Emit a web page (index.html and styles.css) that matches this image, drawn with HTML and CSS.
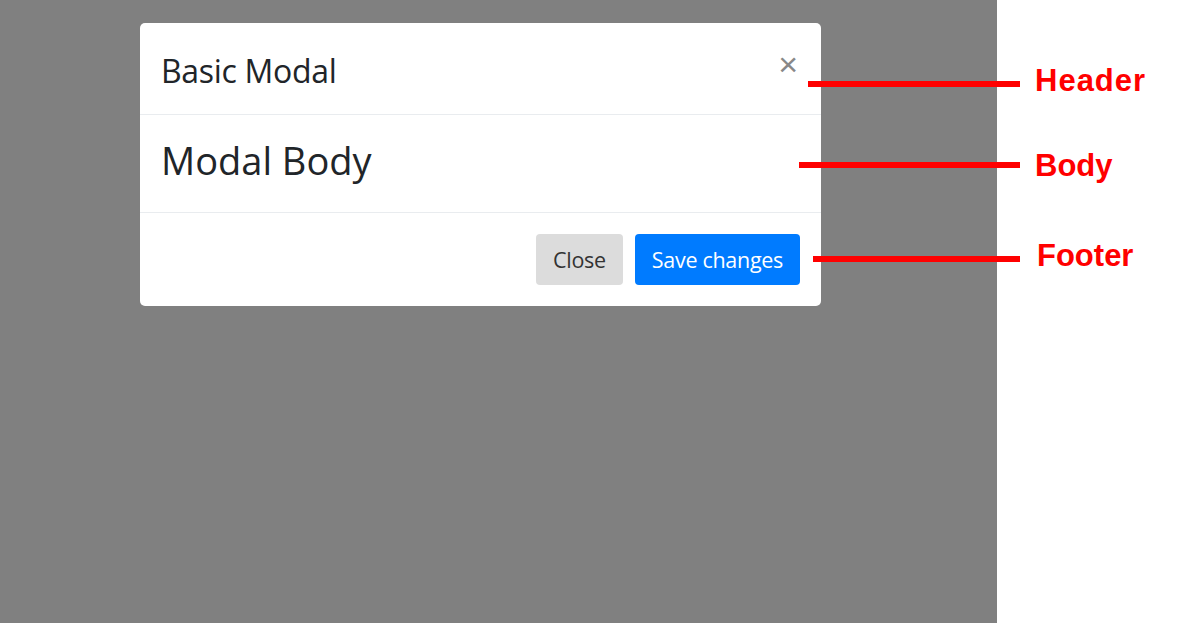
FILE: index.html
```html
<!DOCTYPE html>
<html>
  <head>
    <meta charset="UTF-8" />
    <title>Basic Modal</title>
    <link rel="stylesheet" href="styles.css">
  </head>
  <body>
    <div class="page">
      <div class="backdrop">
        <div class="modal">
          <div class="modal-header">
            <h5 class="modal-title">Basic Modal</h5>
            <button class="close" type="button">&times;</button>
          </div>
          <div class="modal-body">
            <h3>Modal Body</h3>
          </div>
          <div class="modal-footer">
            <button class="btn btn-secondary" type="button">Close</button>
            <button class="btn btn-primary" type="button">Save changes</button>
          </div>
        </div>
      </div>
      <div class="side"></div>
    </div>

    <div class="note note-header">
      <span class="note-line"></span>
      <span class="note-label">Header</span>
    </div>
    <div class="note note-body">
      <span class="note-line"></span>
      <span class="note-label">Body</span>
    </div>
    <div class="note note-footer">
      <span class="note-line"></span>
      <span class="note-label">Footer</span>
    </div>
  </body>
</html>
```

FILE: styles.css
```css
html,
body {
  margin: 0;
  height: 100%;
}
body {
  font-family: "Open Sans", "Noto Sans", sans-serif;
  color: #212529;
  position: relative;
  overflow: hidden;
}
.page {
  display: flex;
  height: 100%;
}
.backdrop {
  width: 997px;
  background-color: #808080;
  padding: 23px 0 0 140px;
  box-sizing: border-box;
}
.side {
  flex: 1;
  background-color: #fff;
}
.modal {
  width: 681px;
  background-color: #fff;
  border-radius: 5px;
}
.modal-header {
  display: flex;
  justify-content: space-between;
  align-items: center;
  height: 91px;
  padding: 0 21px;
  border-bottom: 1px solid #e9ecef;
}
.modal-title {
  margin: 3px 0 0;
  font-size: 32px;
  font-weight: 500;
  letter-spacing: -0.3px;
}
.close {
  border: none;
  background: none;
  padding: 0;
  margin: -10px 2px 0 0;
  font-family: "Liberation Sans", sans-serif;
  font-size: 34px;
  line-height: 1;
  color: #888;
}
.modal-body {
  height: 97px;
  padding: 0 21px;
  display: flex;
  align-items: center;
  border-bottom: 1px solid #e9ecef;
}
.modal-body h3 {
  margin: 0 0 7px;
  font-size: 38px;
  font-weight: 500;
}
.modal-footer {
  display: flex;
  justify-content: flex-end;
  gap: 12px;
  padding: 21px;
}
.btn {
  height: 51px;
  border: none;
  border-radius: 4px;
  font-family: "Open Sans", "Noto Sans", sans-serif;
  font-size: 21.5px;
  letter-spacing: -0.3px;
  padding: 0 17px;
}
.btn-secondary {
  background-color: #dcdcdc;
  color: #333;
}
.btn-primary {
  background-color: #007bff;
  color: #fff;
}
.note {
  position: absolute;
  height: 36px;
  display: flex;
  align-items: center;
  font-family: "Liberation Sans", Arial, sans-serif;
  font-weight: bold;
  font-size: 31px;
  color: #f00;
}
.note-line {
  height: 6px;
  background-color: #f00;
  margin-right: 15px;
}
.note-header {
  top: 66px;
  left: 808px;
}
.note-header .note-line {
  width: 212px;
}
.note-header .note-label {
  margin-bottom: 6px;
  letter-spacing: 1px;
}
.note-body {
  top: 147px;
  left: 799px;
}
.note-body .note-line {
  width: 221px;
}
.note-body .note-label {
  margin-top: 1px;
}
.note-footer {
  top: 241px;
  left: 813px;
}
.note-footer .note-line {
  width: 207px;
  margin-right: 17px;
}
.note-footer .note-label {
  margin-bottom: 6px;
}
```
